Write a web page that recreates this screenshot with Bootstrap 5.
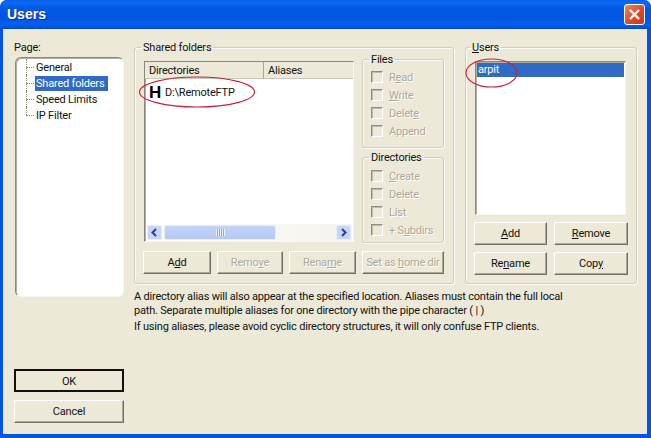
<!DOCTYPE html>
<html><head><meta charset="utf-8">
<link href="https://cdn.jsdelivr.net/npm/bootstrap@5.3.0/dist/css/bootstrap.min.css" rel="stylesheet">
<style>
html,body{margin:0;padding:0;width:651px;height:438px;overflow:hidden;background:#fff}
body,.btn,legend{font-family:Roboto,"Liberation Sans",Arial,sans-serif;font-size:11px;letter-spacing:-.2px;line-height:13px;color:#111}
.xp-win{width:651px;height:438px;background:#0553e3;border-radius:7px 7px 0 0;overflow:hidden;position:relative}
.xp-title{height:29px;padding:0 6px 0 7px;background:linear-gradient(180deg,#0a5fe8 0,#0a6af6 3px,#0358e3 8px,#0355e2 18px,#0460ee 25px,#0349cc 29px)}
.xp-title b{font-family:"Liberation Sans",Arial,sans-serif;letter-spacing:0;color:#fff;font-size:14px;text-shadow:1px 1px 0 #0a2f9a}
.xp-close{width:21px;height:21px;background:linear-gradient(135deg,#eb8a6c,#d9492a 55%,#c83a1c);border:1px solid #fff;border-radius:3px}
.xp-body{height:405px;margin:0 4px 4px 3px;background:#ece9d8}
.xp-left{width:110px;margin-left:11px;padding:12px 0 11px}
.xp-label{height:16px}
.xp-sunken{background:#fff;border:1px solid;border-color:#8a887a #f7f6f0 #f7f6f0 #8a887a;box-shadow:inset 1px 1px 0 #b0ae9f}
.xp-tree{height:240px;margin:0 0 0 1px;width:109px;padding:2px 0 0 19px;position:relative}
.xp-tree .list-group-item{padding:0 1px;height:16px;line-height:15px;background:none;border:0;color:#111;font-size:11px;width:max-content;white-space:nowrap;border-radius:0;position:relative;overflow:visible}
.xp-tree .list-group-item::before{content:"";position:absolute;left:-9px;top:7px;width:8px;border-top:1px dotted #8a887a}
.xp-tree .list-group-item::after{content:"";position:absolute;left:-9px;top:-1px;height:16px;border-left:1px dotted #8a887a}
.xp-tree .list-group-item.active{background:#316ac5;color:#fff;height:15px;margin-bottom:1px;margin-top:0;min-width:73px}
.xp-tree .list-group-item:last-child::after{height:8px}
.xp-right{margin-left:10px;width:503px}
.xp-group{margin:0;padding:0;border:1px solid #d0cebf;border-radius:3px;box-shadow:inset 1px 1px 0 #fbfaf5,1px 1px 0 #fbfaf5}
.xp-group legend{float:none;width:auto;margin:0 0 0 -2px;padding:0 2px;height:12px;line-height:14px;font-size:11px}
.xp-shared{width:320px;height:243px;padding-left:8px;padding-top:0}
.xp-users{width:172px;height:243px;margin-left:11px;padding-left:8px}
.xp-users legend{margin-left:-4px}
.xp-list{width:210px;height:181px;margin:8px 0 0 1px;position:relative}
.xp-head{height:17px;background:#ece9d8;border-bottom:1px solid #c9c7ba;line-height:17px}
.xp-head span{padding-left:4px;border-right:1px solid #aca899;height:16px;width:119px}
.xp-head span+span{width:auto;border:0}
.xp-row{padding:2px 0 0 4px;height:24px}
.xp-h{font-family:"Liberation Sans",Arial,sans-serif;font-size:17px;font-weight:700;width:16px;line-height:17px;color:#000}
.xp-scroll{height:17px;position:absolute;left:1px;right:1px;bottom:0;background:linear-gradient(90deg,#fff,#f4f3ec);padding:1px}
.xp-arrow{width:15px;height:15px;background:#c6d6f8;border:1px solid #e6edfd;border-radius:2px;padding:0}
.xp-thumb{width:112px;height:15px;margin-left:2px;background:linear-gradient(180deg,#c4d3f8,#b5c8f4);border:1px solid #e6edfd;border-radius:2px}
.xp-grip{width:9px;height:7px;background:repeating-linear-gradient(90deg,#eef3fd 0 1px,#8aa6e4 1px 2px)}
.xp-checks{width:82px;margin-left:8px}
.xp-files{height:95px;padding:3px 0 0 8px}
.xp-dirs{height:92px;margin-top:3px;padding:4px 0 0 8px}
.xp-check{height:18px;color:#aca899;text-shadow:1px 1px 0 #fff}
.xp-box{width:12px;height:12px;margin-right:6px;border:1px solid;border-color:#8f8d7e #fff #fff #8f8d7e;box-shadow:inset 1px 1px 0 #bdbbab}
.xp-btn.btn{padding:0;border-radius:0;background:#ece9d8;color:#111;border:1px solid;border-color:#fff #716f64 #716f64 #fff;box-shadow:inset -1px -1px 0 #aca899;height:23px;line-height:21px;font-size:11px;white-space:nowrap;--bs-btn-hover-bg:#ece9d8}
.xp-btn.btn.xp-off{color:#aca899;text-shadow:1px 1px 0 #fff}
.xp-btn.btn.xp-def{border:2px solid #111;box-shadow:none}
.xp-btns{margin-top:8px;gap:6px}
.xp-w68{width:68px}.xp-w66{width:66px}.xp-w67{width:67px}.xp-w82{width:82px}
.xp-ulist{width:151px;height:154px;margin:8px 0 0 1px;padding:1px}
.xp-sel{background:#316ac5;color:#fff;height:14px;line-height:14px;padding-left:1px}
.xp-ubtns{gap:7px;margin-top:7px}
.xp-ubtns .xp-btn{width:73px}
.xp-ubtns .xp-btn+.xp-btn{width:74px}
.xp-note{margin-top:6px;width:440px}
.xp-note p{margin:0 0 2px;line-height:14px;white-space:nowrap}
.xp-marks{position:absolute;left:0;top:0;pointer-events:none}
</style></head>
<body>
<div class="xp-win">
  <div class="xp-title d-flex align-items-center justify-content-between">
    <b>Users</b>
    <div class="xp-close d-flex align-items-center justify-content-center">
      <svg width="13" height="13" viewBox="0 0 13 13"><path d="M2 2 L11 11 M11 2 L2 11" stroke="#fff" stroke-width="2.4"/></svg>
    </div>
  </div>
  <div class="xp-body d-flex">
    <div class="xp-left d-flex flex-column">
      <div class="xp-label">Page:</div>
      <ul class="list-group xp-tree xp-sunken">
        <li class="list-group-item">General</li>
        <li class="list-group-item active">Shared folders</li>
        <li class="list-group-item">Speed Limits</li>
        <li class="list-group-item">IP Filter</li>
      </ul>
      <div class="mt-auto d-flex flex-column gap-2">
        <button class="btn xp-btn xp-def" type="button">OK</button>
        <button class="btn xp-btn" type="button">Cancel</button>
      </div>
    </div>
    <div class="xp-right">
      <div class="d-flex pt-2 mt-1">
        <fieldset class="xp-group xp-shared">
          <legend>Shared folders</legend>
          <div class="d-flex">
            <div class="xp-list xp-sunken">
              <div class="xp-head d-flex"><span>Directories</span><span>Aliases</span></div>
              <div class="xp-row d-flex align-items-center"><span class="xp-h">H</span><span>D:\RemoteFTP</span></div>
              <div class="xp-scroll d-flex align-items-center justify-content-between">
                <div class="xp-arrow d-flex align-items-center justify-content-center"><svg width="9" height="9" viewBox="0 0 9 9"><path d="M6 1 L2.5 4.5 L6 8" fill="none" stroke="#2a3f8c" stroke-width="2"/></svg></div>
                <div class="xp-thumb d-flex align-items-center justify-content-center"><div class="xp-grip"></div></div>
                <div class="flex-grow-1"></div>
                <div class="xp-arrow d-flex align-items-center justify-content-center"><svg width="9" height="9" viewBox="0 0 9 9"><path d="M3 1 L6.5 4.5 L3 8" fill="none" stroke="#2a3f8c" stroke-width="2"/></svg></div>
              </div>
            </div>
            <div class="xp-checks">
              <fieldset class="xp-group xp-files">
                <legend>Files</legend>
                <div class="xp-check d-flex align-items-center"><span class="xp-box"></span><span>R<u>e</u>ad</span></div>
                <div class="xp-check d-flex align-items-center"><span class="xp-box"></span><span><u>W</u>rite</span></div>
                <div class="xp-check d-flex align-items-center"><span class="xp-box"></span><span>Delet<u>e</u></span></div>
                <div class="xp-check d-flex align-items-center"><span class="xp-box"></span><span>Append</span></div>
              </fieldset>
              <fieldset class="xp-group xp-dirs">
                <legend>Directories</legend>
                <div class="xp-check d-flex align-items-center"><span class="xp-box"></span><span><u>C</u>reate</span></div>
                <div class="xp-check d-flex align-items-center"><span class="xp-box"></span><span>Delete</span></div>
                <div class="xp-check d-flex align-items-center"><span class="xp-box"></span><span>List</span></div>
                <div class="xp-check d-flex align-items-center"><span class="xp-box"></span><span>+ S<u>u</u>bdirs</span></div>
              </fieldset>
            </div>
          </div>
          <div class="d-flex xp-btns">
            <button class="btn xp-btn xp-w68" type="button">A<u>d</u>d</button>
            <button class="btn xp-btn xp-off xp-w66" type="button">Remo<u>v</u>e</button>
            <button class="btn xp-btn xp-off xp-w67" type="button">Rena<u>m</u>e</button>
            <button class="btn xp-btn xp-off xp-w82" type="button">Set as <u>h</u>ome dir</button>
          </div>
        </fieldset>
        <fieldset class="xp-group xp-users">
          <legend><u>U</u>sers</legend>
          <div class="xp-ulist xp-sunken"><div class="xp-sel">arpit</div></div>
          <div class="d-flex xp-ubtns">
            <button class="btn xp-btn" type="button"><u>A</u>dd</button>
            <button class="btn xp-btn" type="button"><u>R</u>emove</button>
          </div>
          <div class="d-flex xp-ubtns">
            <button class="btn xp-btn" type="button">Re<u>n</u>ame</button>
            <button class="btn xp-btn" type="button">Cop<u>y</u></button>
          </div>
        </fieldset>
      </div>
      <div class="xp-note">
        <p>A directory alias will also appear at the specified location. Aliases must contain the full local<br>path. Separate multiple aliases for one directory with the pipe character ( | )</p>
        <p>If using aliases, please avoid cyclic directory structures, it will only confuse FTP clients.</p>
      </div>
    </div>
  </div>
  <svg class="xp-marks" width="651" height="438" viewBox="0 0 651 438">
    <ellipse cx="197" cy="92" rx="57.5" ry="15" fill="none" stroke="#c2213f" stroke-width="1.1"/>
    <ellipse cx="491.5" cy="73" rx="25.5" ry="14" fill="none" stroke="#c2213f" stroke-width="1.1"/>
  </svg>
</div>
</body></html>
